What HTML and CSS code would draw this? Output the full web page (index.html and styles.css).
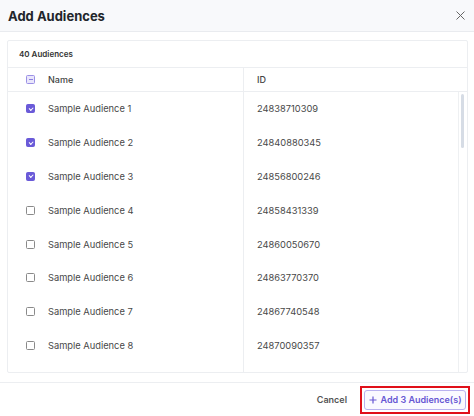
FILE: index.html
```html
<!DOCTYPE html>
<html lang="en">
<head>
  <meta charset="UTF-8" />
  <meta name="viewport" content="width=device-width, initial-scale=1.0"/>
  <title>Add Audiences</title>
  <link rel="stylesheet" href="styles.css">
</head>
<body>

<header class="modal-head">
  <h3>Add Audiences</h3>
  <button class="close-btn" title="Close">
    <svg width="9" height="9" viewBox="0 0 9 9"><path d="M0.5 0.5 L8.5 8.5 M8.5 0.5 L0.5 8.5" stroke="#666" stroke-width="1" fill="none"/></svg>
  </button>
</header>

<div class="modal-content">
  <div class="card">
    <div class="card-title">40 Audiences</div>
    <div class="table-head">
      <div class="cell check-cell"><span class="box partial"></span></div>
      <div class="cell name-cell">Name</div>
      <div class="cell id-cell">ID</div>
    </div>
    <div class="table-body">
      <div class="rows">
        <div class="row">
          <div class="cell check-cell"><span class="box checked"></span></div>
          <div class="cell name-cell">Sample Audience 1</div>
          <div class="cell id-cell">24838710309</div>
        </div>
        <div class="row">
          <div class="cell check-cell"><span class="box checked"></span></div>
          <div class="cell name-cell">Sample Audience 2</div>
          <div class="cell id-cell">24840880345</div>
        </div>
        <div class="row">
          <div class="cell check-cell"><span class="box checked"></span></div>
          <div class="cell name-cell">Sample Audience 3</div>
          <div class="cell id-cell">24856800246</div>
        </div>
        <div class="row">
          <div class="cell check-cell"><span class="box"></span></div>
          <div class="cell name-cell">Sample Audience 4</div>
          <div class="cell id-cell">24858431339</div>
        </div>
        <div class="row">
          <div class="cell check-cell"><span class="box"></span></div>
          <div class="cell name-cell">Sample Audience 5</div>
          <div class="cell id-cell">24860050670</div>
        </div>
        <div class="row">
          <div class="cell check-cell"><span class="box"></span></div>
          <div class="cell name-cell">Sample Audience 6</div>
          <div class="cell id-cell">24863770370</div>
        </div>
        <div class="row">
          <div class="cell check-cell"><span class="box"></span></div>
          <div class="cell name-cell">Sample Audience 7</div>
          <div class="cell id-cell">24867740548</div>
        </div>
        <div class="row">
          <div class="cell check-cell"><span class="box"></span></div>
          <div class="cell name-cell">Sample Audience 8</div>
          <div class="cell id-cell">24870090357</div>
        </div>
        <div class="row row-empty">
          <div class="cell check-cell"></div>
          <div class="cell name-cell"></div>
          <div class="cell id-cell"></div>
        </div>
      </div>
      <div class="scroll-track"><div class="scroll-thumb"></div></div>
    </div>
  </div>
</div>

<footer class="modal-foot">
  <button class="cancel-btn">Cancel</button>
  <div class="highlight">
    <button class="add-btn">
      <svg width="8" height="8" viewBox="0 0 8 8"><path d="M4 0.5 V7.5 M0.5 4 H7.5" stroke="#6656d3" stroke-width="1.2" fill="none"/></svg>
      Add 3 Audience(s)
    </button>
  </div>
</footer>

</body>
</html>
```

FILE: styles.css
```css
body {
  margin: 0;
  font-family: Inter, "Noto Sans", Arial, sans-serif;
  background: #fff;
  color: #444;
  display: flex;
  flex-direction: column;
  height: 100vh;
  overflow: hidden;
}
button {
  font-family: inherit;
  cursor: pointer;
}
.modal-head {
  height: 32px;
  box-sizing: border-box;
  background: #f8f9fb;
  border-bottom: 1px solid #e9ebef;
  padding: 0 8px;
  display: flex;
  justify-content: space-between;
  align-items: center;
}
.modal-head h3 {
  margin: 0;
  font-size: 13px;
  font-weight: 700;
  color: #22262b;
}
.close-btn {
  border: none;
  background: none;
  padding: 0;
  display: flex;
  margin-right: 1px;
}
.modal-content {
  flex: 1;
  min-height: 0;
  padding: 8px 6px 9px 7px;
  display: flex;
}
.card {
  flex: 1;
  border: 1px solid #eceef1;
  border-radius: 2px;
  display: flex;
  flex-direction: column;
  min-height: 0;
}
.card-title {
  height: 26px;
  padding-left: 11px;
  display: flex;
  align-items: center;
  font-size: 8px;
  font-weight: 600;
  color: #333;
  border-bottom: 1px solid #eceef1;
}
.table-head, .row {
  display: grid;
  grid-template-columns: 40px 195px 1fr;
}
.table-head {
  height: 23px;
  border-bottom: 1px solid #eceef1;
  font-size: 9px;
  font-weight: 500;
  color: #444;
}
.cell {
  display: flex;
  align-items: center;
}
.check-cell {
  padding-left: 18px;
}
.id-cell {
  border-left: 1px solid #eceef1;
  padding-left: 13px;
}
.table-body {
  flex: 1;
  min-height: 0;
  display: flex;
}
.rows {
  flex: 1;
  overflow: hidden;
}
.row {
  height: 33.8px;
  font-size: 9.3px;
  color: #484848;
}
.scroll-track {
  width: 8px;
  border-left: 1px solid #eef0f2;
  position: relative;
}
.scroll-thumb {
  position: absolute;
  top: 2px;
  left: 2px;
  width: 3px;
  height: 54px;
  border-radius: 2px;
  background: #d6dce5;
}
.box {
  width: 9px;
  height: 9px;
  box-sizing: border-box;
  border: 1px solid #8a8a8a;
  border-radius: 1.5px;
  background: #fff;
  position: relative;
}
.box.checked {
  background: #6a5ad8;
  border-color: #6a5ad8;
}
.box.checked::after {
  content: "";
  position: absolute;
  left: 2px;
  top: 1.5px;
  width: 3px;
  height: 1.6px;
  border-left: 1px solid #fff;
  border-bottom: 1px solid #fff;
  transform: rotate(-45deg);
}
.box.partial {
  background: #e9e6fb;
  border-color: #9b90e6;
}
.box.partial::after {
  content: "";
  position: absolute;
  left: 1.5px;
  top: 3px;
  width: 4px;
  height: 1px;
  background: #8a7ee0;
}
.modal-foot {
  height: 34px;
  box-sizing: border-box;
  border-top: 1px solid #eceef1;
  padding: 0 4px 0 0;
  display: flex;
  justify-content: flex-end;
  align-items: center;
  gap: 13px;
}
.cancel-btn {
  border: none;
  background: none;
  padding: 0;
  font-size: 9px;
  font-weight: 600;
  color: #555;
}
.highlight {
  border: 2px solid #e0101a;
  padding: 2px;
  display: flex;
}
.add-btn {
  width: 102px;
  height: 20px;
  border: 1px solid #b9b1ef;
  border-radius: 3px;
  background: #faf9ff;
  color: #6656d3;
  font-size: 9px;
  font-weight: 600;
  display: flex;
  align-items: center;
  justify-content: center;
  gap: 4px;
  padding: 0;
}
```
